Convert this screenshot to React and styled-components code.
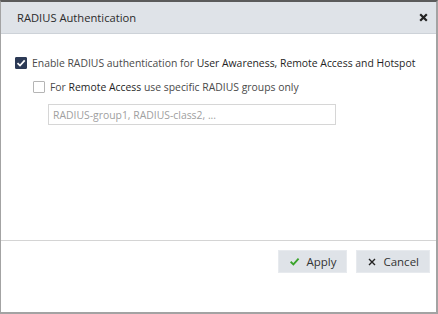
import React from 'react';
import styled, { createGlobalStyle } from 'styled-components';

const GlobalStyle = createGlobalStyle`
  html, body {
    margin: 0;
    padding: 0;
    background: #ffffff;
  }
  * {
    box-sizing: border-box;
  }
`;

const Dialog = styled.div`
  width: 438px;
  height: 314px;
  display: flex;
  flex-direction: column;
  border: 1px solid #a3a3a3;
  border-top: 2px solid #5b5b5b;
  border-right-width: 2px;
  border-bottom-width: 2px;
  background: #fff;
  font-family: 'Open Sans', 'Noto Sans', sans-serif;
  color: #4a4a4a;
`;

const Header = styled.div`
  height: 32px;
  flex: none;
  display: flex;
  align-items: center;
  justify-content: space-between;
  padding: 0 6px 0 16px;
  background: #dfe3e8;
  border-bottom: 1px solid #cdd2d8;
`;

const Title = styled.div`
  font-size: 11.2px;
  color: #2b2b2b;
`;

const Close = styled.button`
  border: 0;
  background: none;
  padding: 0;
  width: 14px;
  height: 14px;
  display: flex;
  align-items: center;
  justify-content: center;
  cursor: pointer;
`;

const Body = styled.div`
  flex: 1;
  padding: 22px 14px 0;
  display: flex;
  flex-direction: column;
  gap: 10px;
  border-bottom: 1px solid #d4d4d4;
`;

const Row = styled.label`
  display: flex;
  align-items: center;
  gap: 5px;
  padding-left: ${(p) => p.indent || 0}px;
  font-size: 10.4px;
  white-space: nowrap;
`;

const Box = styled.span`
  width: 12px;
  height: 12px;
  flex: none;
  display: flex;
  align-items: center;
  justify-content: center;
  border: 1px solid ${(p) => (p.checked ? '#2c3a56' : '#b5b5b5')};
  background: ${(p) => (p.checked ? '#2c3a56' : '#fff')};
  border-radius: 1px;
`;

const Strong = styled.span`
  color: #1f1f1f;
`;

const Input = styled.input`
  margin-left: 33px;
  width: 288px;
  height: 21px;
  border: 1px solid #d6d6d6;
  padding: 0 4px;
  font-family: inherit;
  font-size: 10.4px;
  color: #333;
  outline: none;

  &::placeholder {
    color: #a0a0a0;
  }
`;

const Footer = styled.div`
  height: 71px;
  flex: none;
  display: flex;
  justify-content: flex-end;
  align-items: flex-start;
  gap: 9px;
  padding: 9px 6px 0 0;
`;

const Button = styled.button`
  height: 23px;
  padding: 0 ${(p) => p.pad || 10}px;
  display: flex;
  align-items: center;
  gap: 6px;
  background: #dfe3e8;
  border: 1px solid #e7eaee;
  font-family: inherit;
  font-size: 11.5px;
  color: #333;
  cursor: pointer;
`;

const CheckMark = ({ color, size = 10 }) => (
  <svg width={size} height={size} viewBox="0 0 10 10">
    <path d="M1.5 5.2 L4 7.6 L8.7 2.4" fill="none" stroke={color} strokeWidth="1.7" />
  </svg>
);

const Cross = ({ size = 10, width = 1.6 }) => (
  <svg width={size} height={size} viewBox="0 0 10 10">
    <path d="M2 2 L8 8 M8 2 L2 8" stroke="#222" strokeWidth={width} />
  </svg>
);

export default function App() {
  return (
    <>
      <GlobalStyle />
      <Dialog>
        <Header>
          <Title>RADIUS Authentication</Title>
          <Close aria-label="Close">
            <Cross size={11} width={2} />
          </Close>
        </Header>
        <Body>
          <Row>
            <Box checked>
              <CheckMark color="#fff" size={10} />
            </Box>
            <span>
              Enable RADIUS authentication for <Strong>User Awareness, Remote Access and Hotspot</Strong>
            </span>
          </Row>
          <Row indent={18}>
            <Box />
            <span>
              For <Strong>Remote Access</Strong> use specific RADIUS groups only
            </span>
          </Row>
          <Input placeholder="RADIUS-group1, RADIUS-class2, ..." />
        </Body>
        <Footer>
          <Button pad={10}>
            <CheckMark color="#3aa42b" size={11} />
            Apply
          </Button>
          <Button pad={10}>
            <Cross size={10} width={1.4} />
            Cancel
          </Button>
        </Footer>
      </Dialog>
    </>
  );
}
